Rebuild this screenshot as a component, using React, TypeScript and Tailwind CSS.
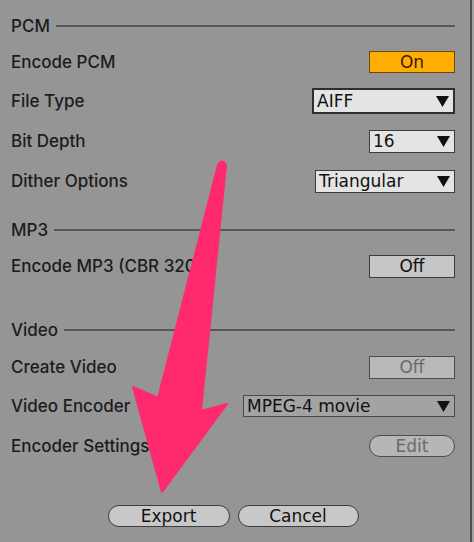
import React from 'react';

const labelFont = { fontFamily: 'Inter, "Noto Sans", sans-serif' };
const ctrlFont = { fontFamily: '"DejaVu Sans", Verdana, sans-serif' };

const SectionHeader: React.FC<{ title: string; className?: string }> = ({ title, className }) => (
    <div className={`flex items-center h-[24px] ${className ?? ''}`}>
        <span className="text-[17px] font-medium text-[#1c1c1c] leading-none">{title}</span>
        <div className="flex-1 ml-[6px] h-[2px] bg-[#575757]" />
    </div>
);

const Row: React.FC<{ label: string; className?: string; children?: React.ReactNode }> = ({ label, className, children }) => (
    <div className={`flex items-center justify-between h-[24px] ${className ?? ''}`}>
        <span className="text-[17px] font-medium text-[#1c1c1c] leading-none whitespace-nowrap">{label}</span>
        {children}
    </div>
);

const Caret = () => (
    <svg width="13" height="11" viewBox="0 0 13 11" className="shrink-0">
        <polygon points="0,0 13,0 6.5,11" fill="#111" />
    </svg>
);

const Select: React.FC<{ value: string; className: string }> = ({ value, className }) => (
    <div className={`flex items-center justify-between pl-[3px] pr-[4px] ${className}`} style={ctrlFont}>
        <span className="text-[17px] text-[#111] leading-none">{value}</span>
        <Caret />
    </div>
);

const Toggle: React.FC<{ text: string; className: string }> = ({ text, className }) => (
    <div className={`flex items-center justify-center text-[17px] leading-none ${className}`} style={ctrlFont}>
        {text}
    </div>
);

export default function App() {
    return (
        <div className="relative w-[474px] h-[542px] bg-[#a2a2a2] overflow-hidden" style={labelFont}>
            <div className="w-[472px] h-full bg-[#959595] border-r-2 border-[#505050] pl-[11px] pr-[15px] pt-[14px] flex flex-col">
                <SectionHeader title="PCM" />
                <Row label="Encode PCM" className="mt-[12px]">
                    <Toggle text="On" className="w-[86px] h-[22px] bg-[#ffad00] border border-[#6a4b00] text-[#3a2000]" />
                </Row>
                <Row label="File Type" className="mt-[15px]">
                    <Select value="AIFF" className="w-[143px] h-[26px] bg-[#e4e4e4] border-2 border-[#2e2e2e]" />
                </Row>
                <Row label="Bit Depth" className="mt-[16px]">
                    <Select value="16" className="w-[86px] h-[23px] bg-[#e4e4e4] border border-[#3c3c3c]" />
                </Row>
                <Row label="Dither Options" className="mt-[16px]">
                    <Select value="Triangular" className="w-[140px] h-[23px] bg-[#e4e4e4] border border-[#3c3c3c]" />
                </Row>

                <SectionHeader title="MP3" className="mt-[25px]" />
                <Row label="Encode MP3 (CBR 320" className="mt-[12px]">
                    <Toggle text="Off" className="w-[86px] h-[23px] bg-[#c6c6c6] border border-[#3c3c3c] text-[#111]" />
                </Row>

                <SectionHeader title="Video" className="mt-[40px]" />
                <Row label="Create Video" className="mt-[13px]">
                    <Toggle text="Off" className="w-[86px] h-[23px] bg-[#b9b9b9] border border-[#4e4e4e] text-[#6a6a6a]" />
                </Row>
                <Row label="Video Encoder" className="mt-[15px]">
                    <Select value="MPEG-4 movie" className="w-[212px] h-[22px] bg-[#a3a3a3] border border-[#4a4a4a]" />
                </Row>
                <Row label="Encoder Settings" className="mt-[16px]">
                    <Toggle text="Edit" className="w-[86px] h-[22px] rounded-full bg-[#b6b6b6] border border-[#4e4e4e] text-[#6a6a6a]" />
                </Row>

                <div className="flex justify-center gap-[8px] mt-[47px]">
                    <Toggle text="Export" className="w-[122px] h-[22px] rounded-full bg-[#c8c8c8] border border-[#3c3c3c] text-[#111]" />
                    <Toggle text="Cancel" className="w-[121px] h-[22px] rounded-full bg-[#c8c8c8] border border-[#3c3c3c] text-[#111]" />
                </div>
            </div>

            {/* pink arrow drawn over the dialog */}
            <svg className="absolute left-0 top-0 pointer-events-none" width="474" height="542" viewBox="0 0 474 542">
                <path
                    d="M218,165 Q222,158 226,165 L201,411 L227,404 L162,492 L133,387 L158,398 Z"
                    fill="#ff2a6d"
                    stroke="#ff2a6d"
                    strokeWidth="2"
                    strokeLinejoin="round"
                />
            </svg>
        </div>
    );
}
